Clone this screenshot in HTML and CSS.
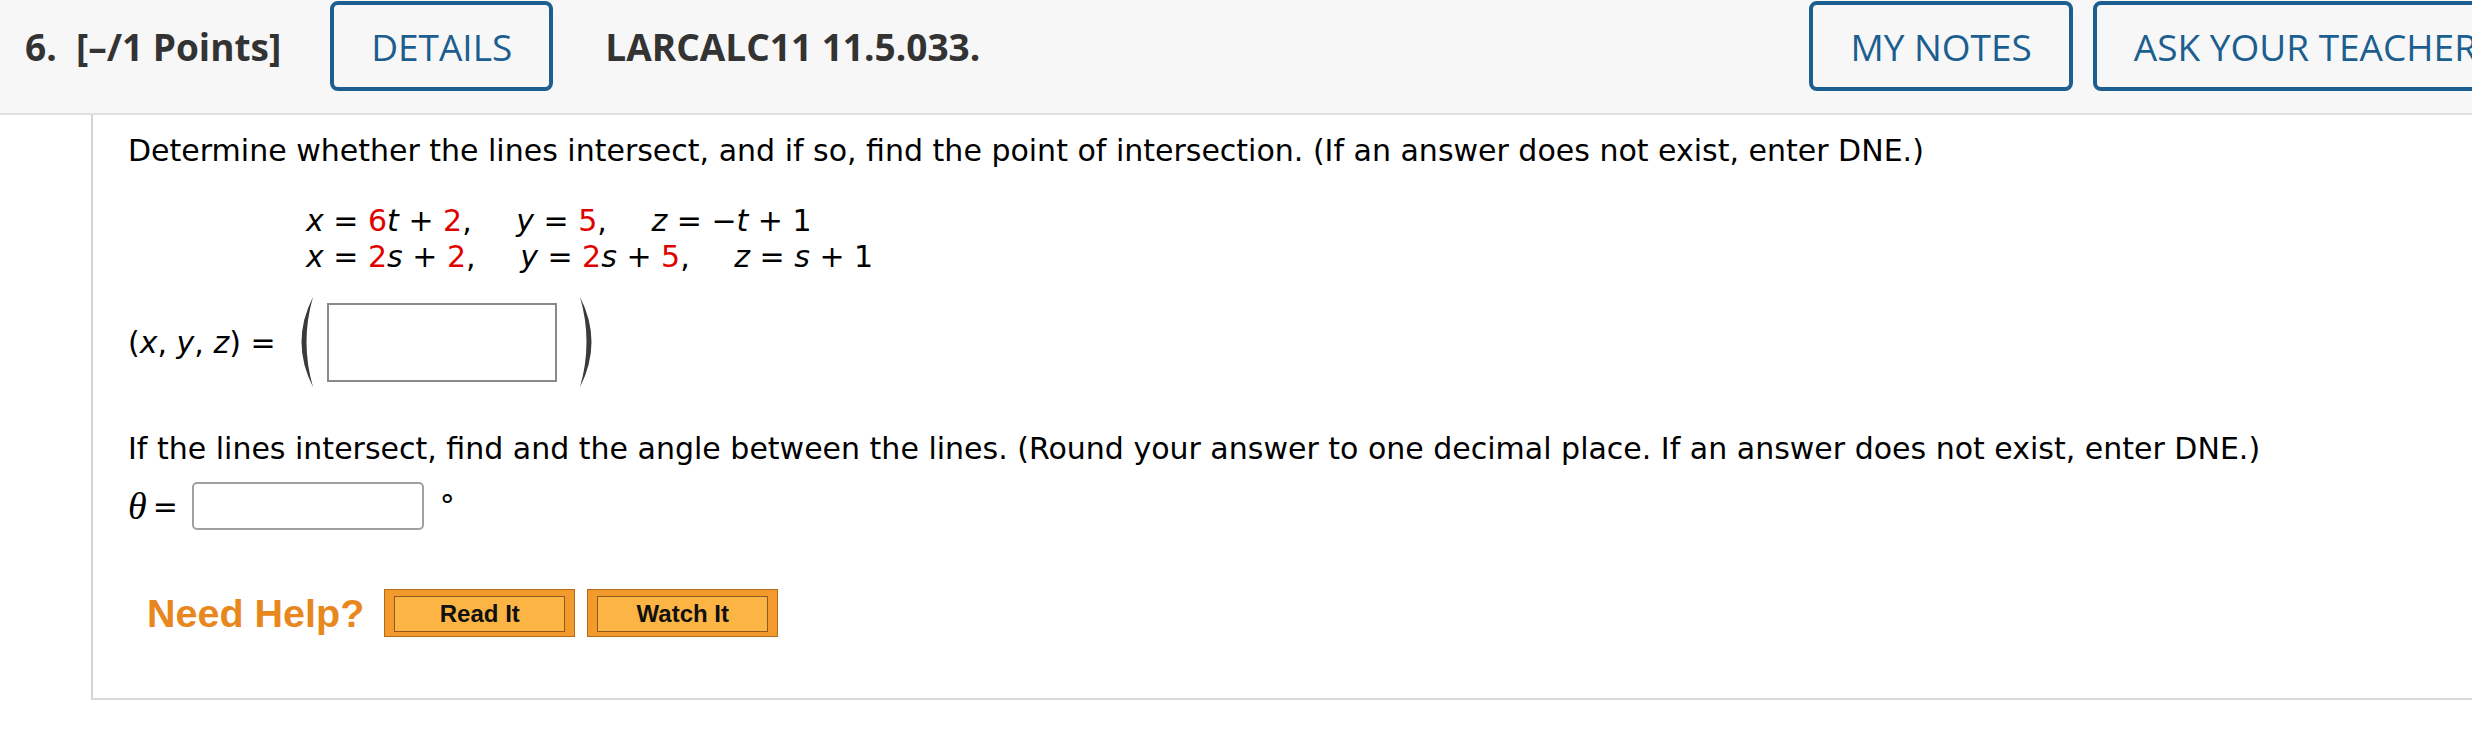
FILE: index.html
```html
<!DOCTYPE html>
<html lang="en">
<head>
  <meta charset="UTF-8" />
  <title>LARCALC11 11.5.033.</title>
  <link rel="stylesheet" href="styles.css">
</head>
<body>
  <div class="page">
    <header class="q-header">
      <span class="q-num">6.&nbsp; [&ndash;/1 Points]</span>
      <a class="hdr-btn" href="#">DETAILS</a>
      <span class="q-code">LARCALC11 11.5.033.</span>
      <div class="hdr-right">
        <a class="hdr-btn" href="#">MY NOTES</a>
        <a class="hdr-btn" href="#">ASK YOUR TEACHER</a>
      </div>
    </header>

    <div class="q-body">
      <p class="prompt">Determine whether the lines intersect, and if so, find the point of intersection. (If an answer does not exist, enter DNE.)</p>

      <div class="eqs">
        <div class="eq-line">
          <span class="eq"><i>x</i> = <span class="red">6</span><i>t</i> + <span class="red">2</span>,</span>
          <span class="eq"><i>y</i> = <span class="red">5</span>,</span>
          <span class="eq"><i>z</i> = &minus;<i>t</i> + 1</span>
        </div>
        <div class="eq-line">
          <span class="eq"><i>x</i> = <span class="red">2</span><i>s</i> + <span class="red">2</span>,</span>
          <span class="eq"><i>y</i> = <span class="red">2</span><i>s</i> + <span class="red">5</span>,</span>
          <span class="eq"><i>z</i> = <i>s</i> + 1</span>
        </div>
      </div>

      <div class="answer-row">
        <span class="lhs">(<i>x</i>, <i>y</i>, <i>z</i>) =</span>
        <svg class="paren paren-left" width="20" height="94" viewBox="0 0 20 94">
          <path d="M17 2 Q-6 47 17 92 Q4 47 17 2 Z" fill="#3a3a3a" />
        </svg>
        <input class="ans-box" type="text">
        <svg class="paren paren-right" width="20" height="94" viewBox="0 0 20 94">
          <path d="M3 2 Q26 47 3 92 Q16 47 3 2 Z" fill="#3a3a3a" />
        </svg>
      </div>

      <p class="prompt prompt-2">If the lines intersect, find and the angle between the lines. (Round your answer to one decimal place. If an answer does not exist, enter DNE.)</p>

      <div class="theta-row">
        <span class="theta">&theta;</span>
        <span class="eq-sign">=</span>
        <input class="ans-small" type="text">
        <span class="deg">&deg;</span>
      </div>

      <div class="help-row">
        <span class="need-help">Need Help?</span>
        <button class="help-btn"><span>Read It</span></button>
        <button class="help-btn"><span>Watch It</span></button>
      </div>
    </div>
  </div>
</body>
</html>
```

FILE: styles.css
```css
html, body {
  margin: 0;
  padding: 0;
  overflow: hidden;
  background-color: #fff;
}

body {
  font-family: "DejaVu Sans", Verdana, sans-serif;
  color: #000;
}

.page {
  width: 2534px;
}

/* question header bar */
.q-header {
  display: flex;
  align-items: center;
  height: 115px;
  box-sizing: border-box;
  padding: 1px 16px 22px 25px;
  background-color: #f7f7f7;
  border-bottom: 2px solid #e0e0e0;
  font-family: "Open Sans", sans-serif;
  font-size: 37px;
  color: #333;
}

.q-num {
  font-weight: 700;
  margin-right: 49px;
  white-space: pre;
}

.q-code {
  font-weight: 700;
  margin-left: 52px;
}

.hdr-btn {
  display: flex;
  align-items: center;
  height: 90px;
  box-sizing: border-box;
  padding: 0 37px;
  border: 4px solid #1b5e8f;
  border-radius: 8px;
  color: #1b5e8f;
  font-weight: 500;
  text-decoration: none;
  white-space: nowrap;
}

.hdr-right {
  display: flex;
  gap: 20px;
  margin-left: auto;
}

/* question body */
.q-body {
  margin-left: 91px;
  min-height: 585px;
  box-sizing: border-box;
  padding: 17px 0 0 35px;
  border-left: 2px solid #d4d4d4;
  border-bottom: 2px solid #d8d8d8;
}

.prompt {
  margin: 0;
  font-size: 30px;
  line-height: 38px;
  white-space: nowrap;
}

.eqs {
  margin-top: 33px;
  padding-left: 178px;
  font-size: 30px;
  line-height: 36px;
}

.eq-line {
  white-space: nowrap;
}

.eq {
  display: inline-block;
  margin-right: 35px;
}

.red {
  color: #e00000;
}

.answer-row {
  display: flex;
  align-items: center;
  margin-top: 20px;
  font-size: 30px;
}

.lhs {
  margin-right: 20px;
}

.paren-left {
  margin-right: 11px;
}

.paren-right {
  margin-left: 20px;
}

.ans-box {
  width: 230px;
  height: 79px;
  box-sizing: border-box;
  margin: 0;
  border: 2px solid #8a8a8a;
  border-radius: 0;
  background: #fff;
}

.prompt-2 {
  margin-top: 41px;
}

.theta-row {
  display: flex;
  align-items: center;
  margin-top: 14px;
  font-size: 30px;
}

.theta {
  font-family: "Liberation Serif", serif;
  font-style: italic;
  font-size: 38px;
  margin-right: 6px;
}

.eq-sign {
  margin-right: 14px;
}

.ans-small {
  width: 232px;
  height: 48px;
  box-sizing: border-box;
  margin: 0;
  border: 2px solid #a0a0a0;
  border-radius: 5px;
  background: #fff;
}

.deg {
  margin-left: 16px;
  margin-top: -2px;
  font-size: 30px;
}

.help-row {
  display: flex;
  align-items: center;
  gap: 12px;
  margin-top: 59px;
  padding-left: 19px;
}

.need-help {
  font-family: "Liberation Sans", Arial, sans-serif;
  font-weight: 700;
  font-size: 39.5px;
  color: #e8871e;
  margin-right: 8px;
}

.help-btn {
  width: 191px;
  height: 48px;
  box-sizing: border-box;
  padding: 6px 9px;
  margin: 0;
  border: 1px solid #b5691c;
  background-color: #f39a2d;
  cursor: pointer;
}

.help-btn span {
  display: flex;
  align-items: center;
  justify-content: center;
  height: 100%;
  border: 1px solid #8e5a1e;
  background-color: #fcb544;
  font-family: "Liberation Sans", Arial, sans-serif;
  font-weight: 700;
  font-size: 24px;
  color: #111;
}
```
